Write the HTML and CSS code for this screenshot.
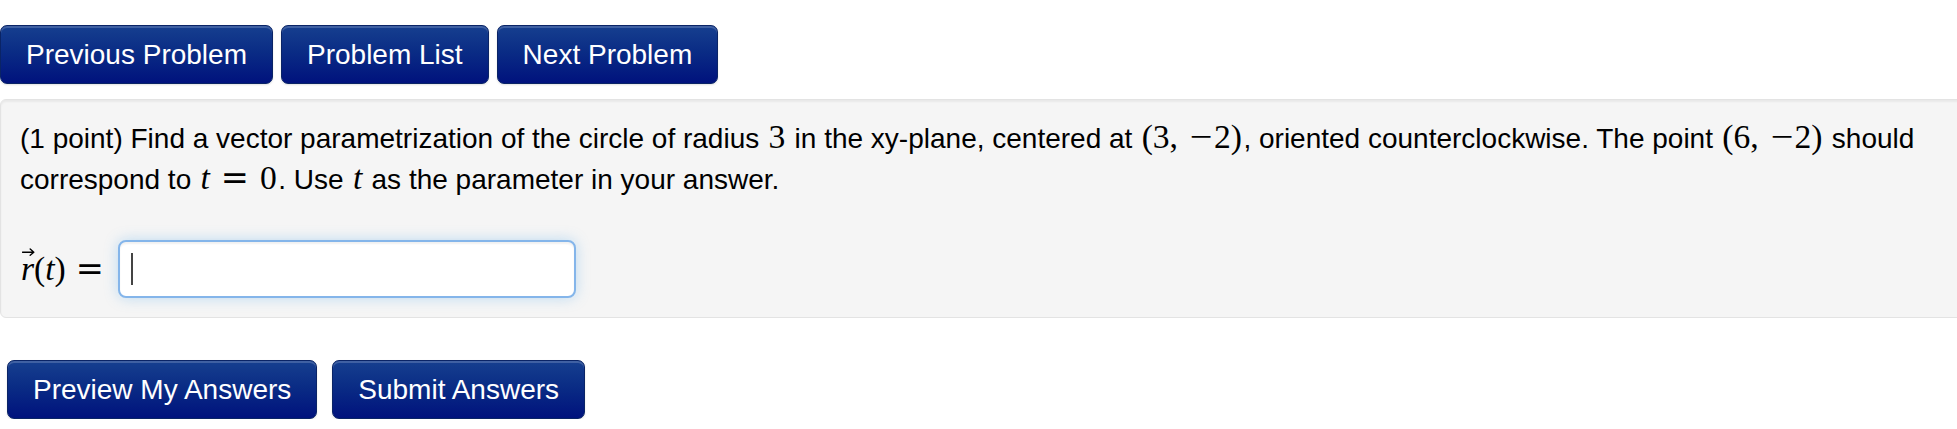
FILE: index.html
```html
<!DOCTYPE html>
<html lang="en">
<head>
<meta charset="utf-8">
<title>Problem</title>
<link rel="stylesheet" href="styles.css">
</head>
<body>
<div class="nav">
  <button class="btn">Previous Problem</button>
  <button class="btn">Problem List</button>
  <button class="btn">Next Problem</button>
</div>
<div class="well">
  <p class="problem"><span>(1 point) Find a vector parametrization of the circle of radius </span><span class="m">3</span><span> in the xy-plane, centered at </span><span class="m">(3,<span class="ts"></span><span class="mn">−</span>2)</span><span>, oriented counterclockwise. The point </span><span class="m">(6,<span class="ts"></span><span class="mn">−</span>2)</span><span> should</span> <span>correspond to </span><span class="m"><i>t</i><span class="eq">=</span>0</span><span>. Use </span><span class="m"><i>t</i></span><span> as the parameter in your answer.</span></p>
  <div class="answer">
    <span class="m label"><span class="vec"><i>r</i><svg class="arrow" width="13" height="8" viewBox="0 0 13 8"><path d="M0.5 4.2 H11.5 M8.2 1 L11.8 4.2 L8.2 7.2" fill="none" stroke="#000" stroke-width="1.4" stroke-linecap="round" stroke-linejoin="round"/></svg></span>(<i>t</i>)<span class="eq">=</span></span>
    <span class="field"><input class="input" type="text" aria-label="answer"><span class="caret"></span></span>
  </div>
</div>
<div class="actions">
  <button class="btn">Preview My Answers</button>
  <button class="btn">Submit Answers</button>
</div>
</body>
</html>
```
FILE: styles.css
```css
html, body {
  margin: 0;
  padding: 0;
  background: #fff;
  overflow: hidden;
}
body {
  font-family: "Liberation Sans", Arial, Helvetica, sans-serif;
  font-size: 28px;
  color: #000;
}
.nav {
  display: flex;
  gap: 8px;
  padding-top: 25px;
}
.btn {
  font-family: "Liberation Sans", Arial, Helvetica, sans-serif;
  font-size: 28px;
  line-height: 39px;
  padding: 9px 25px;
  color: #fff;
  border: 1px solid #0a2466;
  border-radius: 7px;
  background: linear-gradient(to bottom, #163f8f 0%, #0a2c85 45%, #00127d 100%);
  box-shadow: inset 0 2px 0 rgba(255,255,255,0.18), 0 1px 2px rgba(0,0,0,0.12);
  cursor: pointer;
  margin: 0;
}
.well {
  margin-top: 15px;
  margin-right: -12px;
  background: #f5f5f5;
  border: 1px solid #e3e3e3;
  border-radius: 6px;
  box-shadow: inset 0 2px 2px rgba(0,0,0,0.05);
  padding: 18px 19px 19px;
}
.problem {
  margin: 0 0 40px;
  line-height: 41px;
}
.m {
  font-family: "Liberation Serif", "Times New Roman", serif;
  font-size: 1.2em;
  line-height: 1;
  padding: 0 1.5px;
}
.m i {
  font-style: italic;
}
.ts {
  display: inline-block;
  width: 11px;
}
.mn {
  display: inline-block;
  margin: 0 3px 0 3px;
  transform: scaleX(1.2);
}
.eq {
  display: inline-block;
  font-family: "DejaVu Sans", sans-serif;
  font-size: 1em;
  margin: 0 11px;
}
.answer {
  display: flex;
  align-items: center;
  height: 58px;
}
.label {
  display: inline-flex;
  align-items: baseline;
  margin-left: 1px;
  padding: 0;
}
.label .eq {
  margin: 0 0 0 10px;
}
.vec {
  position: relative;
  display: inline-block;
}
.arrow {
  position: absolute;
  left: 1px;
  top: -4px;
}
.field {
  position: relative;
  display: inline-block;
  margin-left: 14px;
}
.input {
  display: block;
  box-sizing: border-box;
  width: 458px;
  height: 58px;
  margin: 0;
  padding: 0 12px;
  border: 2px solid #84b5ea;
  border-radius: 8px;
  background: #fff;
  box-shadow: inset 0 2px 2px rgba(0,0,0,0.06), 0 0 14px rgba(82,168,236,0.35);
  outline: none;
  font-size: 28px;
}
.caret {
  position: absolute;
  left: 13px;
  top: 13px;
  width: 2px;
  height: 32px;
  background: #444;
}
.actions {
  display: flex;
  gap: 15px;
  margin-top: 42px;
  padding-left: 7px;
}
```
